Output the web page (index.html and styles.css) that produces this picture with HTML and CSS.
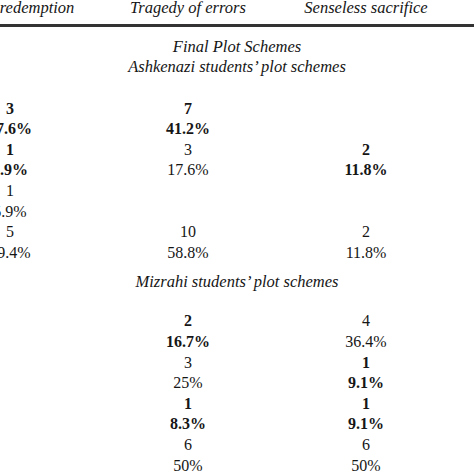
FILE: index.html
```html
<!DOCTYPE html>
<html lang="en">
<head>
<meta charset="utf-8">
<title>Plot schemes</title>
<link rel="stylesheet" href="styles.css">
</head>
<body>
<div class="sheet">
  <div class="head-row">
    <div class="cell">Sin and redemption</div>
    <div class="cell">Tragedy of errors</div>
    <div class="cell">Senseless sacrifice</div>
    <div class="cell"></div>
  </div>
  <div class="rule"><svg class="rule-svg" width="632" height="2" viewBox="0 0 632 2" xmlns="http://www.w3.org/2000/svg"><rect x="0" y="0" width="632" height="2" fill="#333333"/></svg></div>

  <div class="title first">Final Plot Schemes</div>
  <div class="title sub">Ashkenazi students’ plot schemes</div>

  <div class="grid">
    <div class="b">3</div><div class="b">7</div><div></div><div></div>
    <div class="b">17.6%</div><div class="b">41.2%</div><div></div><div></div>
    <div class="b">1</div><div>3</div><div class="b">2</div><div></div>
    <div class="b">5.9%</div><div>17.6%</div><div class="b">11.8%</div><div></div>
    <div>1</div><div></div><div></div><div></div>
    <div>5.9%</div><div></div><div></div><div></div>
    <div>5</div><div>10</div><div>2</div><div></div>
    <div>29.4%</div><div>58.8%</div><div>11.8%</div><div></div>
  </div>

  <div class="title second">Mizrahi students’ plot schemes</div>

  <div class="grid">
    <div></div><div class="b">2</div><div>4</div><div></div>
    <div></div><div class="b">16.7%</div><div>36.4%</div><div></div>
    <div></div><div>3</div><div class="b">1</div><div></div>
    <div></div><div>25%</div><div class="b">9.1%</div><div></div>
    <div></div><div class="b">1</div><div class="b">1</div><div></div>
    <div></div><div class="b">8.3%</div><div class="b">9.1%</div><div></div>
    <div></div><div>6</div><div>6</div><div></div>
    <div></div><div>50%</div><div>50%</div><div></div>
  </div>
</div>
</body>
</html>
```

FILE: styles.css
```css
html, body {
  margin: 0;
  padding: 0;
  background: #ffffff;
}

body {
  overflow: hidden;
  color: #161616;
}

.sheet {
  width: 632px;
  margin: 0 0 0 -79px;
  font-family: "Liberation Serif", serif;
}

.head-row {
  display: grid;
  grid-template-columns: 178px 178px 178px 98px;
  font-style: italic;
  font-size: 16.5px;
  line-height: 20.6px;
  margin-top: -2px;
  padding-bottom: 6px;
  white-space: nowrap;
}

.head-row .cell {
  text-align: center;
}

.rule {
  height: 2px;
  line-height: 0;
  background: #333333;
  border-top: 1px solid #333333;
  margin-top: -1px;
}

.rule-svg {
  display: block;
}

.title {
  text-align: center;
  font-style: italic;
  font-size: 16.5px;
  line-height: 19.5px;
  white-space: nowrap;
}

.title.first {
  margin-top: 10.5px;
}

.title.sub {
  margin-bottom: 22.5px;
}

.title.second {
  margin-top: 8.5px;
  margin-bottom: 20px;
}

.grid {
  display: grid;
  grid-template-columns: 178px 178px 178px 98px;
  grid-auto-rows: 20.6px;
  font-size: 16px;
  line-height: 20.6px;
  text-align: center;
  white-space: nowrap;
}

.b {
  font-weight: bold;
}
```
